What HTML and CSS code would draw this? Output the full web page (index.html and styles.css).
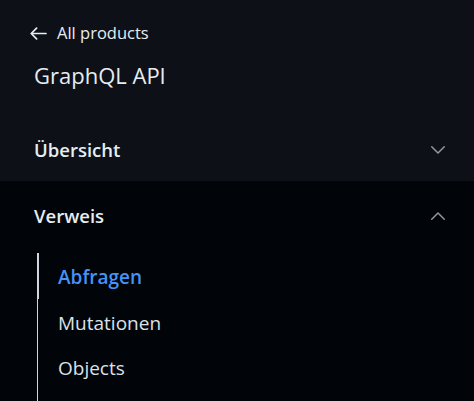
FILE: index.html
```html
<!DOCTYPE html>
<html lang="de">
<head>
<meta charset="utf-8">
<link rel="stylesheet" href="styles.css">
</head>
<body>
<nav class="sidebar">
  <div class="top">
    <a class="back" href="#">
      <svg class="back-icon" viewBox="0 0 17 13" width="17" height="13"><path fill="none" stroke="currentColor" stroke-width="1.7" stroke-linecap="round" stroke-linejoin="round" d="M6.6 1.1 1.2 6.5l5.4 5.4M1.4 6.5H16"/></svg>
      <span>All products</span>
    </a>
    <div class="title">GraphQL API</div>
    <div class="section-row first">
      <span class="section-label">Übersicht</span>
      <svg class="chev" viewBox="0 0 24 24" width="24" height="24"><path fill="currentColor" d="M5.22 8.22a.749.749 0 0 0 0 1.06l6.25 6.25a.749.749 0 0 0 1.06 0l6.25-6.25a.749.749 0 1 0-1.06-1.06L12 13.94 6.28 8.22a.749.749 0 0 0-1.06 0Z"/></svg>
    </div>
  </div>
  <div class="bottom">
    <div class="section-row second">
      <span class="section-label">Verweis</span>
      <svg class="chev" viewBox="0 0 24 24" width="24" height="24"><path fill="currentColor" d="M18.78 15.78a.749.749 0 0 1-1.06 0L12 10.061 6.28 15.78a.749.749 0 1 1-1.06-1.06l6.25-6.25a.749.749 0 0 1 1.06 0l6.25 6.25a.749.749 0 0 1 0 1.06Z"/></svg>
    </div>
    <ul class="sublist">
      <li class="item active">Abfragen</li>
      <li class="item">Mutationen</li>
      <li class="item">Objects</li>
    </ul>
  </div>
</nav>
</body>
</html>
```

FILE: styles.css
```css
html, body {
  margin: 0;
  padding: 0;
}
body {
  background: #010409;
  font-family: "Open Sans", "Noto Sans", sans-serif;
  color: #e6edf3;
  width: 474px;
  height: 401px;
  overflow: hidden;
}
.sidebar {
  display: flex;
  flex-direction: column;
}
.top {
  background: #0d1117;
  height: 181px;
  box-sizing: border-box;
  padding-top: 21px;
}
.back {
  display: flex;
  align-items: center;
  gap: 10px;
  padding-left: 30px;
  color: #e6edf3;
  text-decoration: none;
  font-size: 16.5px;
  line-height: 24px;
  height: 24px;
}
.back-icon {
  flex: none;
}
.title {
  padding-left: 34px;
  margin-top: 14px;
  font-size: 22px;
  line-height: 32px;
}
.section-row {
  display: flex;
  align-items: center;
  justify-content: space-between;
  padding-left: 34px;
  padding-right: 24px;
  height: 24px;
}
.section-row.first {
  margin-top: 47px;
}
.section-row.second {
  margin-top: 23px;
}
.section-label {
  font-size: 18.5px;
  font-weight: 600;
  line-height: 24px;
}
.chev {
  color: #9198a1;
  flex: none;
}
.sublist {
  list-style: none;
  margin: 25px 0 0 37px;
  padding: 0 0 11px;
  border-left: 1px solid #d1d7e0;
}
.item {
  box-sizing: border-box;
  height: 45.5px;
  padding: 11px 0 0 20px;
  font-size: 19px;
  line-height: 26px;
  color: #dce1e7;
}
.item.active {
  color: #4493f8;
  font-weight: 600;
  box-shadow: inset 2px 0 0 #d1d7e0;
  margin-left: -1px;
  padding-left: 21px;
}
```
